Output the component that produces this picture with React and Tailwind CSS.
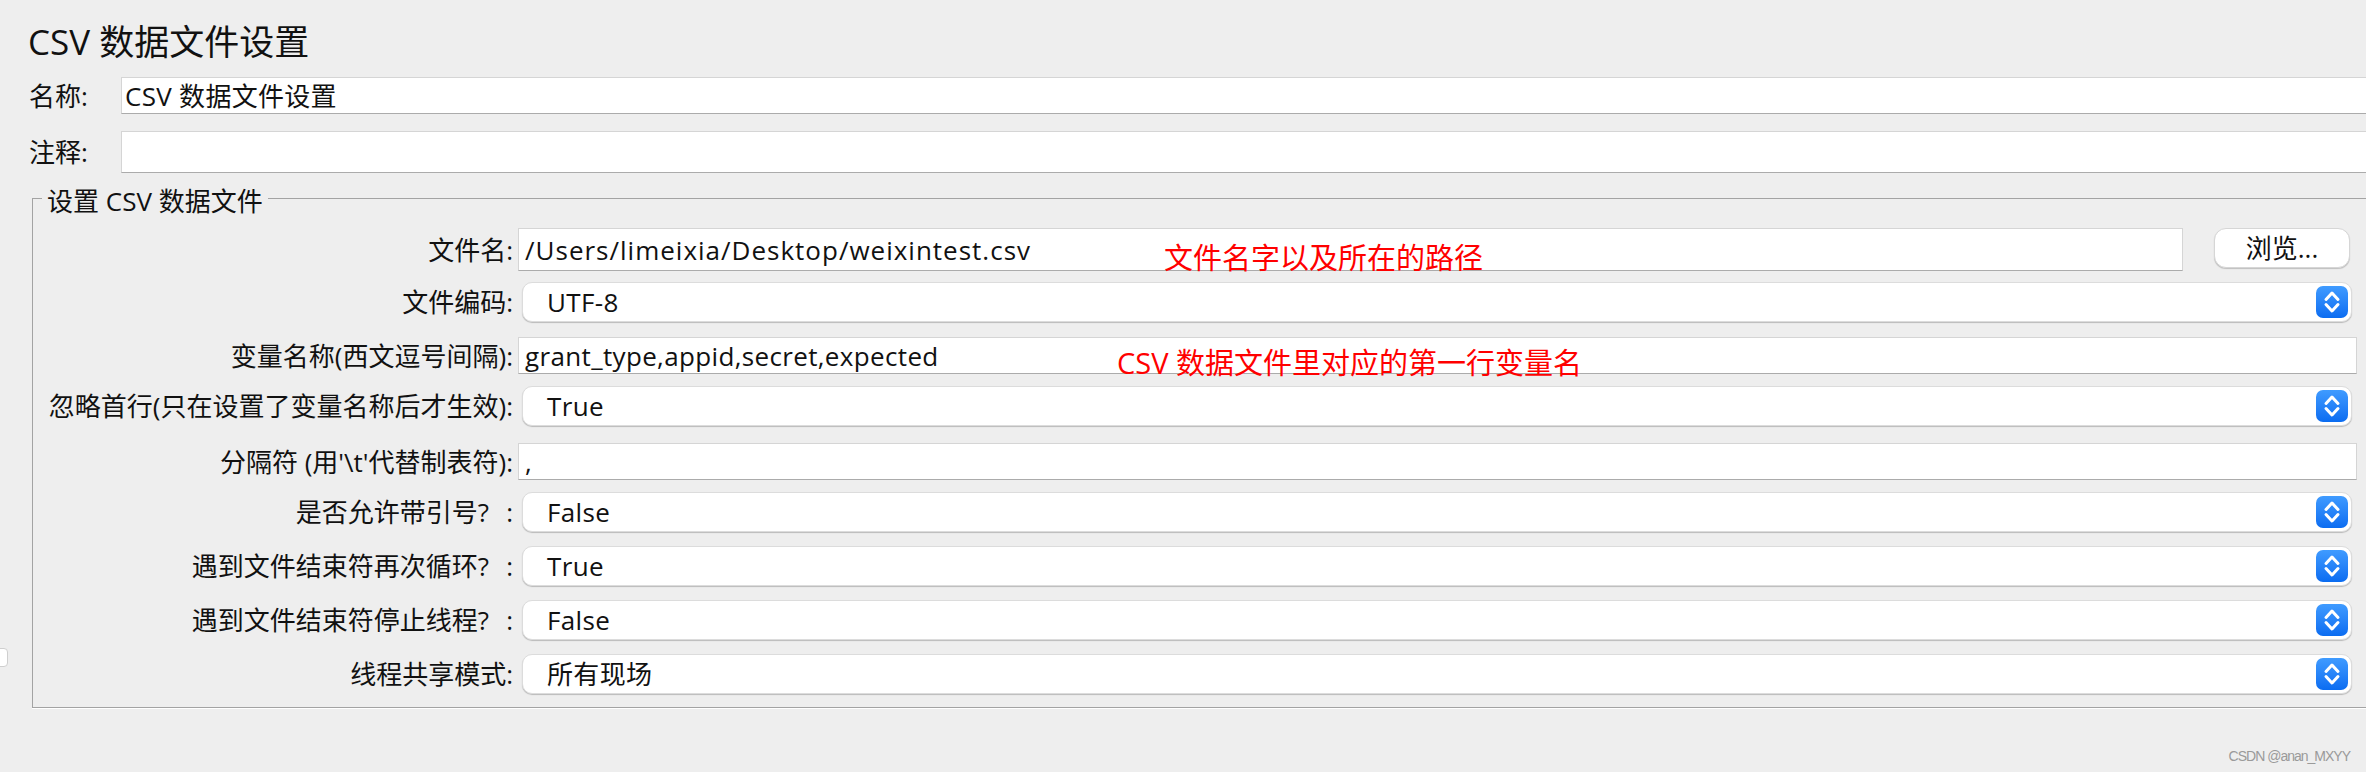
import React from "react";

// 上下箭头（macOS 下拉框右侧的蓝色按钮）
const Stepper = () => (
  <span className="flex h-[32px] w-[32px] shrink-0 items-center justify-center rounded-[7px] bg-linear-to-b from-[#3f9bff] to-[#0a6cf1]">
    <svg viewBox="0 0 32 32" className="h-[32px] w-[32px]" fill="none" stroke="#fff" strokeWidth="3" strokeLinecap="round" strokeLinejoin="round">
      <path d="M10 13.5l6-6.5 6 6.5" />
      <path d="M10 18.5l6 6.5 6-6.5" />
    </svg>
  </span>
);

function Combo({ value }) {
  return (
    <div className="ml-[9px] mr-[14px] flex h-[40px] flex-1 items-center justify-between rounded-[10px] border border-[#dcdcdc] bg-white pl-[24px] pr-[3px] shadow-[0_1px_1px_rgba(0,0,0,0.22)]">
      <span className="tracking-[0.35px]">{value}</span>
      <Stepper />
    </div>
  );
}

const rows = [
  { label: "文件编码:", type: "combo", value: "UTF-8", mt: "mt-[11px]" },
  {
    label: "变量名称(西文逗号间隔):",
    type: "text",
    value: "grant_type,appid,secret,expected",
    mt: "mt-[15px]",
    note: "CSV 数据文件里对应的第一行变量名",
  },
  { label: "忽略首行(只在设置了变量名称后才生效):", type: "combo", value: "True", mt: "mt-[12px]" },
  { label: "分隔符 (用'\\t'代替制表符):", type: "text", value: ",", mt: "mt-[17px]" },
  { label: "是否允许带引号?\u2002\u2009:", type: "combo", value: "False", mt: "mt-[12px]" },
  { label: "遇到文件结束符再次循环?\u2002\u2009:", type: "combo", value: "True", mt: "mt-[14px]" },
  { label: "遇到文件结束符停止线程?\u2002\u2009:", type: "combo", value: "False", mt: "mt-[14px]" },
  { label: "线程共享模式:", type: "combo", value: "所有现场", mt: "mt-[14px]" },
];

export default function App() {
  return (
    <div className="relative h-[772px] w-full overflow-hidden bg-[#eeeeee] font-['Open_Sans','Noto_Sans_CJK_SC',sans-serif] text-[26px] leading-[30px] text-[#111111]">
      {/* 标题 */}
      <h1 className="ml-[28px] mt-[22px] text-[35px] leading-[40px]">CSV 数据文件设置</h1>

      {/* 名称 / 注释 */}
      <div className="mt-[15px] flex items-center pl-[29px]">
        <span className="w-[92px] shrink-0">名称:</span>
        <div className="flex h-[37px] flex-1 items-center border border-r-0 border-[#d5d5d5] border-b-[#ababab] bg-white pl-[3px] tracking-[0.3px]">
          CSV 数据文件设置
        </div>
      </div>
      <div className="mt-[17px] flex items-center pl-[29px]">
        <span className="w-[92px] shrink-0">注释:</span>
        <div className="h-[42px] flex-1 border border-r-0 border-[#d5d5d5] border-b-[#ababab] bg-white" />
      </div>

      {/* 设置 CSV 数据文件 */}
      <div className="relative ml-[32px] mt-[25px] border-y border-l border-[#a3a3a3] pb-[13px] pt-[29px] shadow-[0_1px_0_#ffffff]">
        <span className="absolute -top-[13px] left-[9px] bg-[#eeeeee] px-[5px]">设置 CSV 数据文件</span>

        <div className="flex items-start">
          <div className="flex h-[43px] w-[480px] shrink-0 items-center justify-end">文件名:</div>
          <div className="relative ml-[5px] flex h-[43px] flex-1 items-center border border-[#d5d5d5] border-b-[#ababab] bg-white pl-[6px] tracking-[1px]">
            /Users/limeixia/Desktop/weixintest.csv
            <span className="absolute left-[645px] top-[15px] whitespace-nowrap text-[29px] leading-[28px] tracking-normal text-[#ff0000]">
              文件名字以及所在的路径
            </span>
          </div>
          <button className="ml-[31px] mr-[16px] h-[40px] w-[136px] rounded-[12px] border border-[#d6d6d6] bg-white shadow-[0_1px_1px_rgba(0,0,0,0.2)]">
            浏览...
          </button>
        </div>

        {rows.map((row) => (
          <div key={row.label} className={`flex items-center ${row.mt}`}>
            <div className="w-[480px] shrink-0 whitespace-nowrap text-right">{row.label}</div>
            {row.type === "combo" ? (
              <Combo value={row.value} />
            ) : (
              <div className="relative ml-[5px] mr-[9px] flex h-[37px] flex-1 items-center border border-[#d5d5d5] border-b-[#ababab] bg-white pl-[6px] tracking-[0.35px]">
                {row.value}
                {row.note && (
                  <span className="absolute left-[598px] top-[11px] whitespace-nowrap text-[29px] leading-[28px] tracking-normal text-[#ff0000]">
                    {row.note}
                  </span>
                )}
              </div>
            )}
          </div>
        ))}
      </div>

      {/* 左侧露出的小控件 */}
      <div className="absolute -left-[10px] top-[648px] h-[19px] w-[18px] rounded-[4px] border border-[#cfcfcf] bg-white" />

      <span className="absolute right-[16px] top-[746px] font-['Liberation_Sans',sans-serif] text-[14px] leading-[20px] tracking-[-1px] text-[#9a9a9a]">
        CSDN @anan_MXYY
      </span>
    </div>
  );
}
